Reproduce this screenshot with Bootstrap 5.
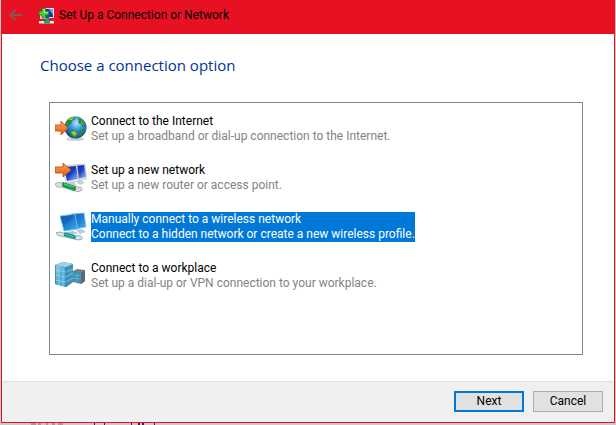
<!DOCTYPE html>
<html lang="en">
<head>
<meta charset="utf-8">
<meta name="viewport" content="width=device-width, initial-scale=1">
<title>Set Up a Connection or Network</title>
<link href="https://cdn.jsdelivr.net/npm/bootstrap@5.3.0/dist/css/bootstrap.min.css" rel="stylesheet">
<style>
body { background: #c9c9c9; font-family: Roboto, "Open Sans", sans-serif; font-size: 12px; line-height: 15px; color: #000; }
.behind { height: 2px; }
.wizard { margin: 0 1px; border: 1px solid #e81123; border-top: 0; background: #fff; }
.titlebar { background: #e81123; height: 34px; padding: 0 8px 4px 7px; font-size: 12px; }
.back.btn { line-height: 0; margin-right: 14px; opacity: 1; }
.app-icon { margin-right: 4px; }
.main-area { padding: 20px 31px 26px 47px; }
.heading { font-family: "Open Sans", "Noto Sans", sans-serif; font-size: 15px; line-height: 22px; color: #003399; margin: 0 0 26px -9px; font-weight: 400; }
.options { border: 1px solid #828790; border-radius: 0; padding: 2px 0; }
.options .option { background: transparent; padding: 9px 5px 10px; gap: 4px; border: 0; color: #000; line-height: 15px; }
.options .option + .option { margin-top: 0; }
.option svg { margin: -2px 0 0; height: 32px; }
.option .detail { color: #838383; }
.option.active .caption { background: #0078d7; }
.option.active .caption, .option.active .detail { color: #fff; }
.actions { background: #f0f0f0; border-top: 1px solid #dfdfdf; padding: 9px 11px 10px; gap: 9px; }
.actions .btn { width: 70px; height: 21px; padding: 0; font-size: 12px; line-height: 17px; border: 1px solid #adadad; border-radius: 0; background: #e1e1e1; color: #000; }
.actions .btn-default { border: 2px solid #0078d7; }
</style>
<script src="https://cdn.jsdelivr.net/npm/bootstrap@5.3.0/dist/js/bootstrap.bundle.min.js" defer></script>
</head>
<body class="vh-100 d-flex flex-column overflow-hidden">
<svg width="0" height="0" class="position-absolute" aria-hidden="true">
  <defs>
    <linearGradient id="orange" x1="0" y1="0" x2="0" y2="1"><stop offset="0" stop-color="#ffa35c"/><stop offset="1" stop-color="#e8590c"/></linearGradient>
    <linearGradient id="screen" x1="0" y1="0" x2="1" y2="1"><stop offset="0" stop-color="#0a1f9c"/><stop offset=".5" stop-color="#1a3fc8"/><stop offset="1" stop-color="#a5c6f8"/></linearGradient>
    <linearGradient id="screenLight" x1="0" y1="0" x2="1" y2="1"><stop offset="0" stop-color="#125fb4"/><stop offset=".55" stop-color="#1f80d4"/><stop offset="1" stop-color="#48b4ee"/></linearGradient>
    <radialGradient id="globe" cx=".55" cy=".3" r=".7"><stop offset="0" stop-color="#b5ecff"/><stop offset=".4" stop-color="#3d9be6"/><stop offset="1" stop-color="#0b3a9c"/></radialGradient>
    <linearGradient id="rack" x1="0" y1="0" x2="1" y2="1"><stop offset="0" stop-color="#8fd0ea"/><stop offset=".5" stop-color="#4fa9d2"/><stop offset="1" stop-color="#4ab0dc"/></linearGradient>
  </defs>
</svg>
<div class="wizard flex-grow-1 d-flex flex-column">
  <header class="titlebar d-flex align-items-center">
    <button class="btn border-0 p-0 back" type="button" aria-label="Back" disabled>
      <svg width="15" height="12" viewBox="0 0 15 12" fill="none" stroke="#8c5352" stroke-width="1.800"><path d="M6.500 1 1.500 6l5 5M1.500 6h12"/></svg>
    </button>
    <svg class="app-icon" width="17" height="17" viewBox="0 0 17 17" aria-hidden="true">
      <path d="M5 1h11v10H5z" fill="#d9e0ea"/><path d="M7 2h8v8H7z" fill="#1736a5"/><path d="M11 2h4v6z" fill="#7da6ee"/>
      <path d="M2 4h9v8H2z" fill="#d5dde3"/><path d="M8 7h3v4H6z" fill="#2149b8"/>
      <path d="M8 11h3v3H8z" fill="#22a565"/><path d="M1 14h15v2.500H1z" fill="#e0eee9"/><path d="M6 13.500h6v3H6z" fill="#15a866"/>
      <path d="M4 1.500h3.500v3h3V8h-3v3H4V8H1V4.500h3z" fill="#4fd32f" stroke="#168018" stroke-width=".8"/><path d="M5 2.500h1.500v3h3" fill="none" stroke="#b6f29a"/>
    </svg>
    <span>Set Up a Connection or Network</span>
  </header>
  <main class="main-area flex-grow-1 d-flex flex-column">
    <h1 class="heading">Choose a connection option</h1>
    <div class="options list-group flex-grow-1">
      <button type="button" class="option list-group-item list-group-item-action d-flex">
        <svg width="32" height="32" viewBox="0 0 32 32" class="flex-shrink-0" aria-hidden="true">
          <ellipse cx="20" cy="27" rx="9" ry="2" fill="#bbb" opacity=".7"/>
          <circle cx="20.500" cy="15.500" r="10.800" fill="url(#globe)" stroke="#2661a8" stroke-width=".6"/>
          <path d="M12 8c2-2 4-3 7-3l1 2-3 2-1 3-3 1-2 2-1-2zM23 6c4 1 6 4 7 8l-2 1-2-3-3-1 1-2zM14 19l5-1 4 2 1 3-4 3c-3-1-5-3-6-7zM25 18l4-1c0 3-2 6-4 7l-1-2z" fill="#2b8b31"/>
          <path d="M13 8q3-3 6-3l-2 3zM26 9l3 4-3-2zM16 20l4-1 2 3-3 2z" fill="#91cf54"/>
          <path d="M0 13h6V9l7 7-7 7v-4H0z" fill="url(#orange)" stroke="#c65a1c" stroke-width=".9"/>
        </svg>
        <span class="caption text-nowrap"><span class="d-block">Connect to the Internet</span><span class="detail d-block">Set up a broadband or dial-up connection to the Internet.</span></span>
      </button>
      <button type="button" class="option list-group-item list-group-item-action d-flex">
        <svg width="32" height="32" viewBox="0 0 32 32" class="flex-shrink-0" aria-hidden="true">
          <path d="M20 20l6-1 4 3-5 2z" fill="#c9ced5"/><path d="M18 4l12-1 2 15-12 2z" fill="#dfe4ea" stroke="#b3bac4" stroke-width=".6"/><path d="M19 5l10-1 2 12-10 2z" fill="url(#screen)"/>
          <path d="M11 21l7-1 4 4-7 1z" fill="#c9ced5"/><path d="M8 5l14-1 2 16-13 2z" fill="#edf0f4" stroke="#b3bac4" stroke-width=".6"/><path d="M9 6l12-1 2 13-11 2z" fill="url(#screen)"/>
          <path d="M0 23q3-3 7-1l16 4q5 0 4 3-3 3-7 1L6 26q-5 1-6-3z" fill="#d9dedc" stroke="#9ba19e" stroke-width=".8"/>
          <path d="M8 21l12 4q2 2 0 5L8 26q-2-2 0-5z" fill="#129a45"/><path d="M9 23l10 3" stroke="#63d48b" stroke-width="1.200"/>
          <path d="M0 6h8V2l8 7-8 7v-4H0z" fill="url(#orange)" stroke="#b95618" stroke-width=".9"/>
        </svg>
        <span class="caption text-nowrap"><span class="d-block">Set up a new network</span><span class="detail d-block">Set up a new router or access point.</span></span>
      </button>
      <button type="button" class="option list-group-item list-group-item-action d-flex active" aria-current="true">
        <svg width="32" height="32" viewBox="0 0 32 32" class="flex-shrink-0" aria-hidden="true">
          <path d="M21 20l6-1 4 3-6 2z" fill="#b5cfe0"/><path d="M16 4l13-1 2 14-11 2z" fill="url(#screenLight)" stroke="#79bfe6" stroke-width=".8"/>
          <path d="M11 22l7-1 5 2-7 2z" fill="#aac8db"/><path d="M5 6l15-2 3 15-14 2z" fill="url(#screenLight)" stroke="#79c8f0" stroke-width=".8"/><path d="M6 7l13-2q-3 7-11 9z" fill="#0d56a8" opacity=".5"/>
          <path d="M1 23q3-2 7 0l14 3q6-1 5 3-4 2-8 0L6 26q-4 0-5-3z" fill="#d7eaf0" stroke="#6f9bad" stroke-width=".8"/>
          <path d="M10 22l9 3q3 2 1 4l-11-3q-1-2 1-4z" fill="#149181"/><path d="M10 24l9 3" stroke="#5ed1bd" stroke-width="1"/>
        </svg>
        <span class="caption text-nowrap"><span class="d-block">Manually connect to a wireless network</span><span class="detail d-block">Connect to a hidden network or create a new wireless profile.</span></span>
      </button>
      <button type="button" class="option list-group-item list-group-item-action d-flex">
        <svg width="32" height="32" viewBox="0 0 32 32" class="flex-shrink-0" aria-hidden="true">
          <path d="M18 12l4-2 8 1v11l-4 3-8-2z" fill="#6e8290"/><path d="M18 13l8 1v10l-8-2z" fill="#398fb7"/><path d="M26 14l4-3v11l-4 3z" fill="#5a6972"/>
          <path d="M18 16l8 1m-8 2 8 1m-4-6v9" stroke="#8fcde4" stroke-width=".5" fill="none"/>
          <path d="M0 6l8-3 10 2v18l-7 5-11-3z" fill="#53798e"/><path d="M0 6l11 2v20L0 25z" fill="url(#rack)"/><path d="M11 8l7-3v18l-7 5z" fill="#3f93bb"/><path d="M0 6l8-3 10 2-7 3z" fill="#a9d0e0"/>
          <path d="M0 11l11 2 7-3M0 16l11 2 7-4M0 21l11 2 7-4M4 7v19M8 8v19" fill="none" stroke="#a9dcee" stroke-width=".6"/>
          <path d="M11 8v20M.5 6v19" fill="none" stroke="#2f6a88" stroke-width=".6"/>
        </svg>
        <span class="caption text-nowrap"><span class="d-block">Connect to a workplace</span><span class="detail d-block">Set up a dial-up or VPN connection to your workplace.</span></span>
      </button>
    </div>
  </main>
  <footer class="actions d-flex justify-content-end">
    <button type="button" class="btn btn-default">Next</button>
    <button type="button" class="btn">Cancel</button>
  </footer>
</div>
<svg class="behind flex-shrink-0 d-block" width="200" height="2" aria-hidden="true">
  <path d="M31 1h5m2 0h3m5 0h2m4 0h3m3 0h5" stroke="#a39aa0" stroke-width="2"/><path d="M94 1h1m9 0h1m26 0h1m6 0h2m2 0h2m10 0h1" stroke="#352255" stroke-width="2"/>
</svg>
</body>
</html>
